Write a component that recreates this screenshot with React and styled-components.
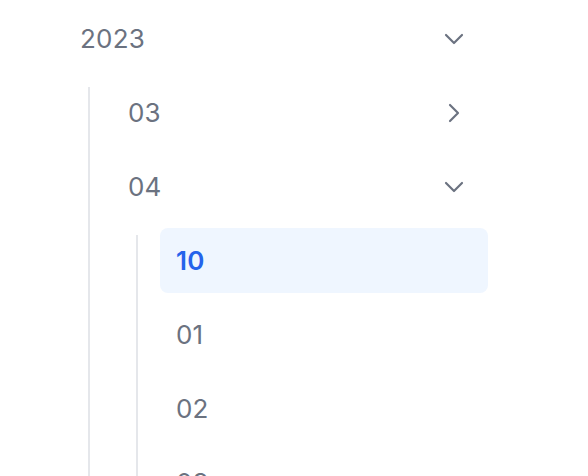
import React from "react";
import styled, { createGlobalStyle } from "styled-components";

const GlobalStyle = createGlobalStyle`
  html, body {
    margin: 0;
    padding: 0;
    background: #ffffff;
  }
  body {
    font-family: Inter, "Noto Sans", sans-serif;
    -webkit-font-smoothing: antialiased;
  }
`;

const Page = styled.div`
  padding: 6px 0 0 64px;
  width: 424px;
`;

const List = styled.div`
  display: flex;
  flex-direction: column;
  gap: 9px;
`;

const Children = styled(List)`
  position: relative;
  margin-left: 24px;
  padding-left: 24px;

  &::before {
    content: "";
    position: absolute;
    left: 0;
    top: 7px;
    bottom: 0;
    width: 2px;
    background: #e5e7eb;
  }
`;

const Row = styled.div`
  display: flex;
  align-items: center;
  justify-content: space-between;
  height: 65px;
  padding: 0 18px 0 16px;
  border-radius: 8px;
  background: ${p => (p.$active ? "#eff6ff" : "transparent")};
  color: ${p => (p.$active ? "#2563eb" : "#6b7280")};
  font-size: 26px;
  font-weight: ${p => (p.$active ? 600 : 400)};
  letter-spacing: 0.2px;
`;

const Chevron = ({ dir }) => (
  <svg
    width="32"
    height="32"
    viewBox="0 0 24 24"
    fill="none"
    stroke="#6b7280"
    strokeWidth="1.6"
    strokeLinecap="round"
    strokeLinejoin="round"
  >
    {dir === "down" ? <path d="m6 9 6 6 6-6" /> : <path d="m9 18 6-6-6-6" />}
  </svg>
);

const Node = ({ label, open, active, children }) => (
  <>
    <Row $active={active}>
      <span>{label}</span>
      {children !== undefined && <Chevron dir={open ? "down" : "right"} />}
    </Row>
    {open && children}
  </>
);

export default function App() {
  return (
    <>
      <GlobalStyle />
      <Page>
        <List>
          <Node label="2023" open>
            <Children>
              <Node label="03">{null}</Node>
              <Node label="04" open>
                <Children>
                  <Node label="10" active />
                  <Node label="01" />
                  <Node label="02" />
                  <Node label="03" />
                </Children>
              </Node>
            </Children>
          </Node>
        </List>
      </Page>
    </>
  );
}
